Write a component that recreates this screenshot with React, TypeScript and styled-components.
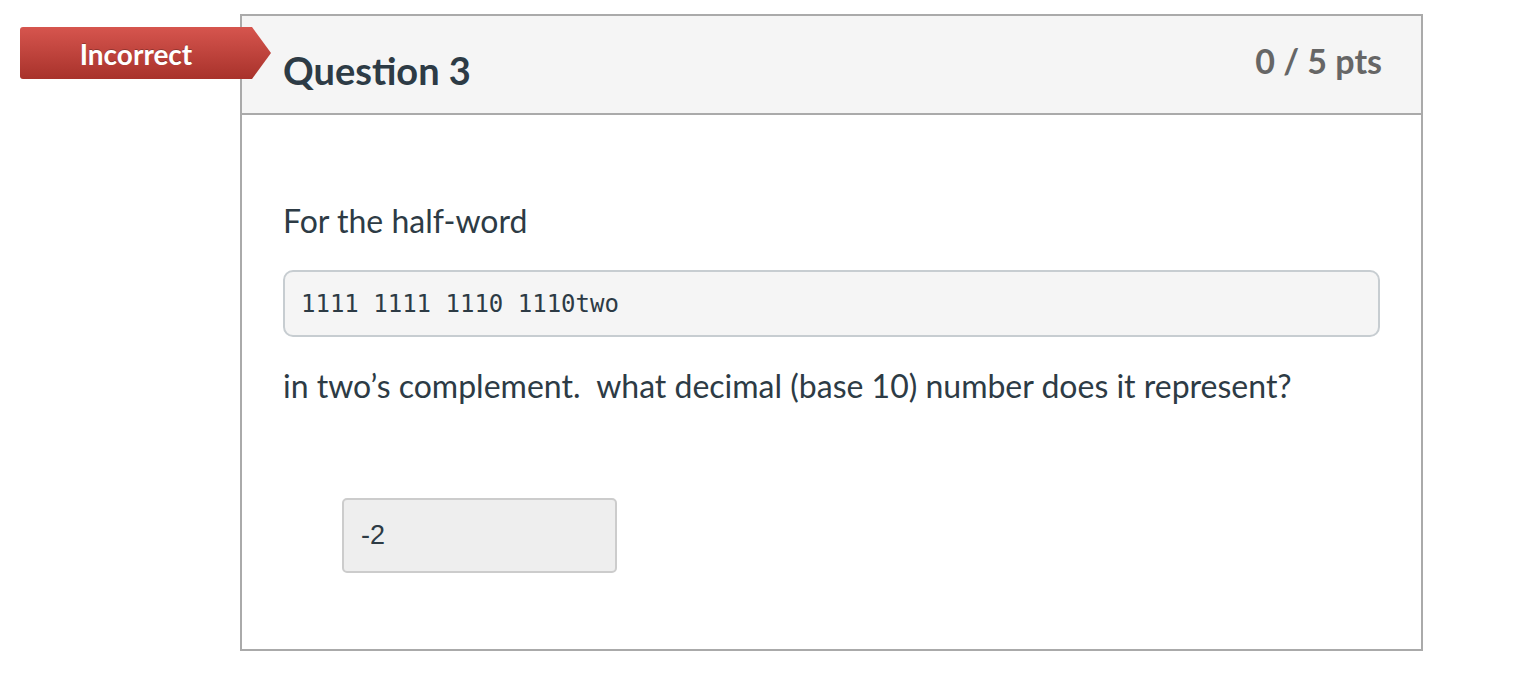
import React from 'react'
import styled, { createGlobalStyle } from 'styled-components'

const GlobalStyle = createGlobalStyle`
  html, body {
    margin: 0;
    padding: 0;
    background: #ffffff;
  }
  body {
    font-family: Lato, 'Liberation Sans', sans-serif;
    color: #2d3b45;
  }
`

export default function App() {
  return (
    <>
      <GlobalStyle />
      <Page>
        <QuestionCard>
          <ResultBadge>
            <BadgeLabel>Incorrect</BadgeLabel>
            <BadgeTip viewBox="0 0 22 52" preserveAspectRatio="none">
              <defs>
                <linearGradient id="tipFill" x1="0" y1="0" x2="0" y2="1">
                  <stop offset="0" stopColor="#d6554e" />
                  <stop offset="1" stopColor="#a8322b" />
                </linearGradient>
              </defs>
              <path d="M0 0 L2 0 L21 26 L2 52 L0 52 Z" fill="url(#tipFill)" />
            </BadgeTip>
          </ResultBadge>
          <Header>
            <Title>Question 3</Title>
            <Points>0 / 5 pts</Points>
          </Header>
          <Body>
            <Paragraph>For the half-word</Paragraph>
            <CodeBlock>1111 1111 1110 1110two</CodeBlock>
            <Paragraph>in two’s complement.&nbsp; what decimal (base 10) number does it represent?</Paragraph>
            <AnswerBox>-2</AnswerBox>
          </Body>
        </QuestionCard>
      </Page>
    </>
  )
}

const Page = styled.div`
  padding: 14px 0 0 240px;
  width: 1538px;
  height: 688px;
  box-sizing: border-box;
`

const QuestionCard = styled.div`
  position: relative;
  width: 1183px;
  height: 637px;
  box-sizing: border-box;
  border: 2px solid #aaaaaa;
  background: #ffffff;
`

const ResultBadge = styled.div`
  position: absolute;
  left: -222px;
  top: 11px;
  display: flex;
  height: 52px;
`

const BadgeLabel = styled.div`
  width: 232px;
  height: 52px;
  box-sizing: border-box;
  display: flex;
  align-items: center;
  justify-content: center;
  padding-top: 2px;
  border-radius: 3px 0 0 3px;
  background: linear-gradient(#d6554e, #a8322b);
  color: #ffffff;
  font-weight: 700;
  font-size: 28px;
  text-shadow: 0 -1px 0 rgba(0, 0, 0, 0.25);
`

const BadgeTip = styled.svg`
  width: 22px;
  height: 52px;
  margin-left: -2px;
`

const Header = styled.div`
  height: 99px;
  box-sizing: border-box;
  display: flex;
  justify-content: space-between;
  align-items: flex-start;
  padding: 0 39px 0 41px;
  background: #f5f5f5;
  border-bottom: 2px solid #aaaaaa;
`

const Title = styled.h2`
  margin: 32px 0 0;
  font-size: 38px;
  font-weight: 700;
  line-height: 44px;
  color: #2d3b45;
`

const Points = styled.div`
  margin-top: 25px;
  font-size: 34px;
  font-weight: 700;
  line-height: 40px;
  color: #666666;
`

const Body = styled.div`
  padding: 84px 41px 0 41px;
`

const Paragraph = styled.p`
  margin: 0;
  font-size: 32px;
  line-height: 44px;
  color: #2d3b45;
`

const CodeBlock = styled.pre`
  margin: 27px 0 27px;
  height: 67px;
  box-sizing: border-box;
  display: flex;
  align-items: center;
  padding: 0 16px;
  background: #f5f5f5;
  border: 2px solid #c7cdd1;
  border-radius: 10px;
  font-family: 'DejaVu Sans Mono', 'Liberation Mono', monospace;
  font-size: 24px;
  color: #2d3b45;
`

const AnswerBox = styled.div`
  margin: 90px 0 0 59px;
  width: 275px;
  height: 75px;
  box-sizing: border-box;
  display: flex;
  align-items: center;
  padding: 0 17px 0;
  background: #eeeeee;
  border: 2px solid #cccccc;
  border-radius: 5px;
  font-family: 'Liberation Sans', Arial, sans-serif;
  font-size: 27px;
  color: #2d3b45;
`
